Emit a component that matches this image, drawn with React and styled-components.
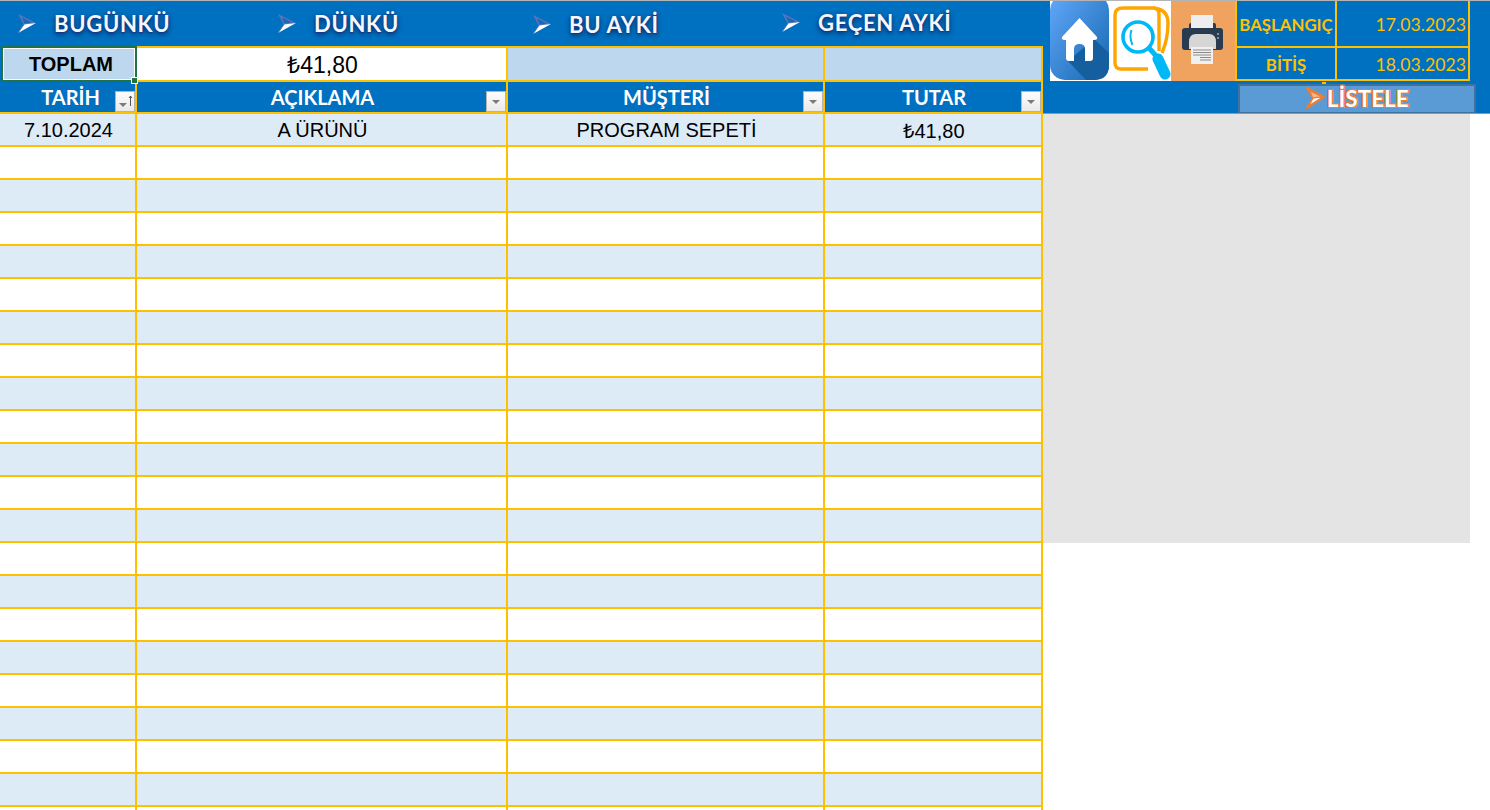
import React from 'react';
import styled, { createGlobalStyle } from 'styled-components';

const GOLD = '#ffc000';
const BLUE = '#0070c0';
const COLUMNS = '137px 371px 317px 218px';

const navItems = [
  { label: 'BUGÜNKÜ', width: 260, lift: 0 },
  { label: 'DÜNKÜ', width: 255, lift: 0 },
  { label: 'BU AYKİ', width: 249, lift: 1 },
  { label: 'GEÇEN AYKİ', width: 261, lift: -1 },
];

const headers = [
  { label: 'TARİH', sorted: true },
  { label: 'AÇIKLAMA' },
  { label: 'MÜŞTERİ' },
  { label: 'TUTAR' },
];

const rows = Array.from({ length: 22 }, (_, i) =>
  i === 0 ? ['7.10.2024', 'A ÜRÜNÜ', 'PROGRAM SEPETİ', '₺41,80'] : ['', '', '', '']
);

const GlobalStyle = createGlobalStyle`
  html, body {
    margin: 0;
    padding: 0;
    background: #fff;
    overflow: hidden;
  }
`;

const Page = styled.div`
  width: 1490px;
  height: 810px;
  overflow: hidden;
  border-top: 1px solid #b4b4b4;
  box-sizing: border-box;
  font-family: "Liberation Sans", Arial, sans-serif;
`;

const Top = styled.div`
  display: flex;
  height: 113px;
  background: ${BLUE};
  box-shadow: inset 0 -1px 0 #7f9db9;
`;

const LeftBlock = styled.div`
  width: 1043px;
  flex: none;
`;

const NavBar = styled.div`
  display: flex;
  height: 45px;
`;

const NavItem = styled.div`
  display: flex;
  align-items: center;
  box-sizing: border-box;
  flex: none;
  width: ${(p) => p.$width}px;
  padding-left: 18px;
  gap: 18px;
  transform: translateY(${(p) => p.$lift}px);
`;

const NavLabel = styled.span`
  font-family: Lato, "Open Sans", sans-serif;
  font-weight: 700;
  font-size: 22px;
  letter-spacing: 0.7px;
  color: #f4f7fd;
  text-shadow: 0 1px 1px rgba(30, 50, 130, 0.9), 0 2px 5px rgba(0, 20, 70, 0.85);
`;

const TotalRow = styled.div`
  display: grid;
  grid-template-columns: ${COLUMNS};
  height: 35px;
`;

const TotalCell = styled.div`
  display: flex;
  align-items: center;
  justify-content: center;
  box-sizing: border-box;
  padding-left: 2px;
  border-top: 2px solid ${GOLD};
  border-bottom: 2px solid ${GOLD};
  border-right: 2px solid ${GOLD};
  background: ${(p) => (p.$white ? '#fff' : '#bdd7ee')};
  color: #000;
  font-size: 23px;
`;

const SelectedCell = styled.div`
  position: relative;
  z-index: 1;
  display: flex;
  align-items: center;
  justify-content: center;
  box-sizing: border-box;
  margin-left: 1px;
  padding-left: 4px;
  background: #bdd7ee;
  border: 2px solid #217346;
  box-shadow: inset 0 0 0 1px #fff;
  font-weight: 700;
  font-size: 20px;
  color: #000;

  &::after {
    content: '';
    position: absolute;
    right: -3px;
    bottom: -4px;
    width: 5px;
    height: 5px;
    background: #217346;
    border: 1px solid #fff;
  }
`;

const HeaderRow = styled.div`
  display: grid;
  grid-template-columns: ${COLUMNS};
  height: 33px;
`;

const HeaderCell = styled.div`
  position: relative;
  display: flex;
  align-items: center;
  justify-content: center;
  box-sizing: border-box;
  padding-left: 2px;
  border-right: 2px solid ${GOLD};
  border-bottom: 2px solid ${GOLD};
  font-family: Lato, "Open Sans", sans-serif;
  font-weight: 700;
  font-size: 20px;
  color: #fff;

  &:first-child {
    padding-left: 6px;
  }
`;

const FilterButton = styled.div`
  position: absolute;
  right: 0;
  bottom: 0;
  width: 20px;
  height: 21px;
  box-sizing: border-box;
  display: flex;
  align-items: flex-end;
  justify-content: center;
  background: linear-gradient(#fdfdfd, #e9e9e9);
  border: 1px solid #b3b3b3;
`;

const RightBlock = styled.div`
  flex: 1;
  display: flex;
  flex-direction: column;
`;

const ToolRow = styled.div`
  display: flex;
  padding-left: 7px;
  height: 80px;
`;

const Tile = styled.div`
  flex: none;
  width: ${(p) => p.$width}px;
  height: 80px;
  background: ${(p) => p.$bg};
  svg {
    display: block;
  }
`;

const DateTable = styled.div`
  display: grid;
  grid-template-columns: 100px 133px;
  grid-template-rows: 47px 33px;
  width: 235px;
  box-sizing: border-box;
  border-left: 2px solid ${GOLD};
  border-bottom: 2px solid ${GOLD};
  font-family: Lato, "Open Sans", sans-serif;
  color: ${GOLD};
`;

const DateCell = styled.div`
  display: flex;
  align-items: center;
  justify-content: ${(p) => (p.$value ? 'flex-end' : 'center')};
  box-sizing: border-box;
  white-space: nowrap;
  border-right: 2px solid ${GOLD};
  border-bottom: ${(p) => (p.$last ? 'none' : `2px solid ${GOLD}`)};
  padding-right: ${(p) => (p.$value ? '2px' : '0')};
  padding-top: ${(p) => (p.$last ? '0' : '2px')};
  font-weight: ${(p) => (p.$value ? 400 : 700)};
  font-size: ${(p) => (p.$value ? '17.7px' : '16.8px')};
`;

const ListButton = styled.div`
  position: relative;
  display: flex;
  align-items: center;
  justify-content: center;
  gap: 1px;
  width: 238px;
  height: 29px;
  margin: 3px 0 0 195px;
  padding-bottom: 2px;
  box-sizing: border-box;
  background: #5b9bd5;
  border: 2px solid #41719c;
  border-bottom-width: 1px;

  &::before {
    content: '';
    position: absolute;
    top: -4px;
    left: 82px;
    width: 4px;
    height: 2px;
    background: ${GOLD};
  }
`;

const ListLabel = styled.span`
  font-family: Lato, "Open Sans", sans-serif;
  font-weight: 700;
  font-size: 22px;
  letter-spacing: 0.3px;
  color: #fff;
  text-shadow: 1px 0 0 #ed7d31, -1px 0 0 #ed7d31, 0 1px 0 #ed7d31, 0 -1px 0 #ed7d31,
    1px 1px 0 #ed7d31, -1px -1px 0 #ed7d31, 1px -1px 0 #ed7d31, -1px 1px 0 #ed7d31;
`;

const Body = styled.div`
  display: flex;
  align-items: flex-start;
`;

const Sheet = styled.div`
  width: 1043px;
  flex: none;
`;

const Row = styled.div`
  display: grid;
  grid-template-columns: ${COLUMNS};
  height: 33px;
  background: ${(p) => (p.$alt ? '#ddebf7' : '#fff')};
`;

const Cell = styled.div`
  display: flex;
  align-items: center;
  justify-content: center;
  box-sizing: border-box;
  padding: 2px 0 0 2px;
  border-right: 2px solid ${GOLD};
  border-bottom: 2px solid ${GOLD};
  font-size: 20px;
  color: #000;
`;

const SidePanel = styled.div`
  width: 427px;
  height: 429px;
  background: #e4e4e4;
`;

function NavArrow() {
  return (
    <svg width="18" height="19" viewBox="0 0 18 19" style={{ flex: 'none' }}>
      <polygon points="0,0 18,9 6,11" fill="#5b73b8" />
      <polygon points="4,3.5 14,8.6 6.5,9.6" fill="#1668b8" />
      <polygon points="6,10.5 18,9 0,19" fill="#fff" />
      <path d="M0 19L6 10.5" stroke="#5b73b8" strokeWidth="1" />
    </svg>
  );
}

function ListArrow() {
  return (
    <svg width="21" height="24" viewBox="0 0 21 24" style={{ flex: 'none' }}>
      <polygon
        points="2,2 19,11 2,22 8,12"
        fill="#ed7d31"
        stroke="#ed7d31"
        strokeWidth="2"
        strokeLinejoin="round"
      />
      <polygon points="6,6 15,10.6 8,11.2" fill="#f7b98f" />
      <polygon points="8.6,12.4 15.5,11.8 5.5,18" fill="#fff" />
    </svg>
  );
}

function SortGlyph({ sorted }) {
  return (
    <svg width="18" height="19" viewBox="0 0 18 19">
      <polygon points={sorted ? '3,11 11,11 7,15' : '5,8 13,8 9,12'} fill="#7b7b7b" />
      {sorted && <path d="M14.5 14V4M13 6l1.5-2 1.5 2" fill="none" stroke="#555" strokeWidth="1" />}
    </svg>
  );
}

function HomeIcon() {
  return (
    <svg width="59" height="80" viewBox="0 0 59 80">
      <defs>
        <linearGradient id="homeBg" x1="0" y1="0" x2="1" y2="1">
          <stop offset="0" stopColor="#62a8fb" />
          <stop offset="1" stopColor="#1467ad" />
        </linearGradient>
      </defs>
      <rect x="0" y="-6" width="59" height="85" rx="15" fill="url(#homeBg)" />
      <path d="M44 38L59 52V64Q59 79 44 79H36L18 60Z" fill="#155f9f" />
      <path
        d="M29.5 17L47 36Q48 39 44 39H43V57Q43 60 40 60H35V48Q35 43 29.5 43Q24 43 24 48V60H19Q16 60 16 57V39H15Q11 39 12 36Z"
        fill="#fff"
      />
    </svg>
  );
}

function SearchIcon() {
  return (
    <svg width="62" height="81" viewBox="0 0 62 81">
      <path
        d="M39 68H12Q6 68 6 62V14Q6 7 14 7H44M44 7Q49 7 50 12V50M44 7Q59 8 59 22Q59 38 53 52"
        fill="none"
        stroke="#ffa500"
        strokeWidth="3.4"
      />
      <circle cx="29" cy="36" r="15" fill="#fff" stroke="#00b8f5" strokeWidth="3.6" />
      <path d="M22.5 29Q20 36 23.5 44" fill="none" stroke="#00b8f5" strokeWidth="2" />
      <path d="M40 47L49 57" stroke="#00b8f5" strokeWidth="5" />
      <path d="M49 58L56 73" stroke="#00b8f5" strokeWidth="11" strokeLinecap="round" />
    </svg>
  );
}

function PrinterIcon() {
  return (
    <svg width="64" height="80" viewBox="0 0 64 80">
      <rect x="18" y="22" width="27" height="8" rx="2" fill="#2a3a4f" />
      <rect x="20" y="14" width="22" height="15" fill="#eeeeee" />
      <path d="M11 30Q11 27 14 27H49Q52 27 52 30V46Q52 49 49 49H14Q11 49 11 46Z" fill="#2a3a4f" />
      <circle cx="47" cy="33" r="1" fill="#9fb0c0" />
      <circle cx="47" cy="37" r="1" fill="#9fb0c0" />
      <path d="M18 48V41Q18 33 25 33H38Q45 33 45 41V48Z" fill="#d6d6d6" />
      <rect x="20" y="46" width="22" height="17" fill="#f0f0f0" />
      <path d="M22 49H40M22 51.5H40M22 54H40M29 56.5H40M29 59H40" stroke="#8a8a8a" strokeWidth="1.1" />
    </svg>
  );
}

function App() {
  return (
    <Page>
      <GlobalStyle />
      <Top>
        <LeftBlock>
          <NavBar>
            {navItems.map((item) => (
              <NavItem key={item.label} $width={item.width} $lift={item.lift}>
                <NavArrow />
                <NavLabel>{item.label}</NavLabel>
              </NavItem>
            ))}
          </NavBar>
          <TotalRow>
            <SelectedCell>TOPLAM</SelectedCell>
            <TotalCell $white>₺41,80</TotalCell>
            <TotalCell />
            <TotalCell />
          </TotalRow>
          <HeaderRow>
            {headers.map((h) => (
              <HeaderCell key={h.label}>
                {h.label}
                <FilterButton>
                  <SortGlyph sorted={h.sorted} />
                </FilterButton>
              </HeaderCell>
            ))}
          </HeaderRow>
        </LeftBlock>
        <RightBlock>
          <ToolRow>
            <Tile $width={59} $bg="#fff">
              <HomeIcon />
            </Tile>
            <Tile $width={62} $bg="#fff">
              <SearchIcon />
            </Tile>
            <Tile $width={64} $bg="#f0a35e">
              <PrinterIcon />
            </Tile>
            <DateTable>
              <DateCell>BAŞLANGIÇ</DateCell>
              <DateCell $value>17.03.2023</DateCell>
              <DateCell $last>BİTİŞ</DateCell>
              <DateCell $value $last>
                18.03.2023
              </DateCell>
            </DateTable>
          </ToolRow>
          <ListButton>
            <ListArrow />
            <ListLabel>LİSTELE</ListLabel>
          </ListButton>
        </RightBlock>
      </Top>
      <Body>
        <Sheet>
          {rows.map((row, i) => (
            <Row key={i} $alt={i % 2 === 0}>
              {row.map((value, j) => (
                <Cell key={j}>{value}</Cell>
              ))}
            </Row>
          ))}
        </Sheet>
        <SidePanel />
      </Body>
    </Page>
  );
}

export default App;
